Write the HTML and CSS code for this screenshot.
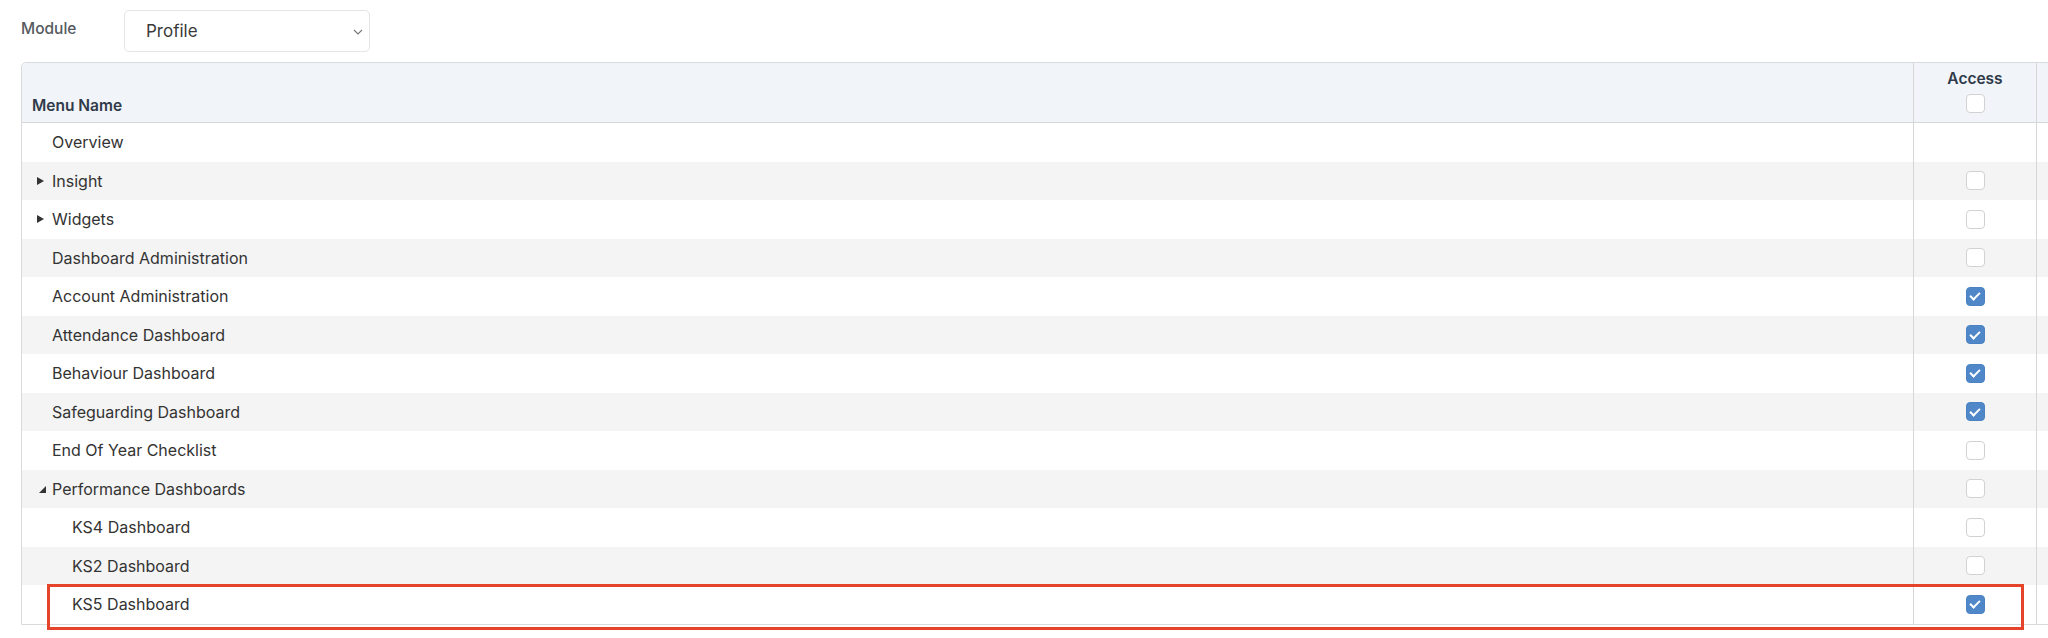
FILE: index.html
```html
<!DOCTYPE html>
<html lang="en">
<head>
<meta charset="utf-8">
<title>Module access</title>
<link rel="stylesheet" href="styles.css">
</head>
<body>
<div class="page">
  <div class="toolbar">
    <label class="field-label">Module</label>
    <div class="select">
      <span class="select-value">Profile</span>
      <svg class="chevron" width="10" height="6" viewBox="0 0 10 6"><path d="M1 1 L5 5 L9 1" fill="none" stroke="#777" stroke-width="1.1"/></svg>
    </div>
  </div>

  <div class="table">
    <div class="row head">
      <div class="cell name-head">Menu Name</div>
      <div class="cell access-head"><span>Access</span><span class="cb"></span></div>
      <div class="cell extra"></div>
    </div>

    <div class="row">
      <div class="cell name"><span class="toggle"></span>Overview</div>
      <div class="cell access"></div>
      <div class="cell extra"></div>
    </div>
    <div class="row alt">
      <div class="cell name"><span class="toggle"><span class="tri-right"></span></span>Insight</div>
      <div class="cell access"><span class="cb"></span></div>
      <div class="cell extra"></div>
    </div>
    <div class="row">
      <div class="cell name"><span class="toggle"><span class="tri-right"></span></span>Widgets</div>
      <div class="cell access"><span class="cb"></span></div>
      <div class="cell extra"></div>
    </div>
    <div class="row alt">
      <div class="cell name"><span class="toggle"></span>Dashboard Administration</div>
      <div class="cell access"><span class="cb"></span></div>
      <div class="cell extra"></div>
    </div>
    <div class="row">
      <div class="cell name"><span class="toggle"></span>Account Administration</div>
      <div class="cell access"><span class="cb on"></span></div>
      <div class="cell extra"></div>
    </div>
    <div class="row alt">
      <div class="cell name"><span class="toggle"></span>Attendance Dashboard</div>
      <div class="cell access"><span class="cb on"></span></div>
      <div class="cell extra"></div>
    </div>
    <div class="row">
      <div class="cell name"><span class="toggle"></span>Behaviour Dashboard</div>
      <div class="cell access"><span class="cb on"></span></div>
      <div class="cell extra"></div>
    </div>
    <div class="row alt">
      <div class="cell name"><span class="toggle"></span>Safeguarding Dashboard</div>
      <div class="cell access"><span class="cb on"></span></div>
      <div class="cell extra"></div>
    </div>
    <div class="row">
      <div class="cell name"><span class="toggle"></span>End Of Year Checklist</div>
      <div class="cell access"><span class="cb"></span></div>
      <div class="cell extra"></div>
    </div>
    <div class="row alt">
      <div class="cell name"><span class="toggle"><svg class="tri-open" width="7" height="7" viewBox="0 0 7 7"><path d="M7 0 L7 7 L0 7 Z" fill="#333"/></svg></span>Performance Dashboards</div>
      <div class="cell access"><span class="cb"></span></div>
      <div class="cell extra"></div>
    </div>
    <div class="row">
      <div class="cell name child"><span class="toggle"></span>KS4 Dashboard</div>
      <div class="cell access"><span class="cb"></span></div>
      <div class="cell extra"></div>
    </div>
    <div class="row alt">
      <div class="cell name child"><span class="toggle"></span>KS2 Dashboard</div>
      <div class="cell access"><span class="cb"></span></div>
      <div class="cell extra"></div>
    </div>
    <div class="row highlight-row">
      <div class="cell name child"><span class="toggle"></span>KS5 Dashboard</div>
      <div class="cell access"><span class="cb on"></span></div>
      <div class="cell extra"></div>
      <div class="highlight"></div>
    </div>
  </div>
</div>
</body>
</html>
```

FILE: styles.css
```css
* { box-sizing: border-box; }

html, body {
  margin: 0;
  padding: 0;
  background: #ffffff;
  overflow: hidden;
}

body {
  font-family: Inter, "Noto Sans", "Liberation Sans", sans-serif;
  color: #333333;
  width: 2048px;
  height: 638px;
}

.page {
  padding: 10px 0 0 21px;
}

.toolbar {
  display: flex;
  align-items: center;
  height: 42px;
}

.field-label {
  width: 103px;
  font-size: 15.5px;
  font-weight: 500;
  color: #555a60;
  margin-top: -6px;
}

.select {
  width: 246px;
  height: 42px;
  border: 1px solid #e3e5e8;
  border-radius: 5px;
  display: flex;
  align-items: center;
  justify-content: space-between;
  padding: 0 6px 0 21px;
}

.select-value {
  font-size: 17px;
  color: #3a3a3a;
}

.chevron { margin-top: 1px; }

.table {
  margin-top: 10px;
  width: 2300px;
  border: 1px solid #d9dadc;
  border-radius: 5px 0 0 0;
  position: relative;
}

.row {
  display: grid;
  grid-template-columns: 1891px 123px 1fr;
  height: 38.5px;
  background: #ffffff;
}

.row.alt { background: #f4f4f4; }

.row.head {
  height: 60px;
  background: #f1f4f8;
  border-bottom: 1px solid #d6d7d9;
  border-radius: 5px 0 0 0;
}

.cell {
  display: flex;
  align-items: center;
  font-size: 16px;
  color: #333333;
}

.cell.access, .cell.access-head {
  border-left: 1px solid #d6d6d6;
  justify-content: center;
}

.cell.extra { border-left: 1px solid #d6d6d6; }

.name-head {
  align-items: flex-end;
  padding: 0 0 7px 10px;
  font-size: 15.5px;
  font-weight: 600;
  color: #2f3a4a;
}

.access-head {
  flex-direction: column;
  justify-content: flex-end;
  align-items: center;
  padding-bottom: 4px;
  gap: 6px;
  font-size: 15.5px;
  font-weight: 600;
  color: #2f3a4a;
}

.name { padding-left: 15px; }
.name.child { padding-left: 35px; }

.toggle {
  width: 15px;
  display: inline-flex;
  align-items: center;
  justify-content: flex-start;
}

.tri-right {
  width: 0;
  height: 0;
  border-top: 4.5px solid transparent;
  border-bottom: 4.5px solid transparent;
  border-left: 7px solid #333333;
}

.tri-open { margin-left: 2px; margin-top: 1px; }

.cb {
  width: 19px;
  height: 19px;
  border: 1.5px solid #d2d2d2;
  border-radius: 4px;
  background: #ffffff;
  position: relative;
  display: inline-block;
}

.cb.on {
  background: #4f87c9;
  border-color: #4a82c2;
}

.cb.on::after {
  content: "";
  position: absolute;
  left: 5.5px;
  top: 2.5px;
  width: 4px;
  height: 8px;
  border-right: 2px solid #ffffff;
  border-bottom: 2px solid #ffffff;
  transform: rotate(45deg);
}

.highlight-row { position: relative; }

.highlight {
  position: absolute;
  left: 25px;
  top: -1px;
  width: 1977px;
  height: 46px;
  border: 3px solid #e6432b;
  pointer-events: none;
}
```
